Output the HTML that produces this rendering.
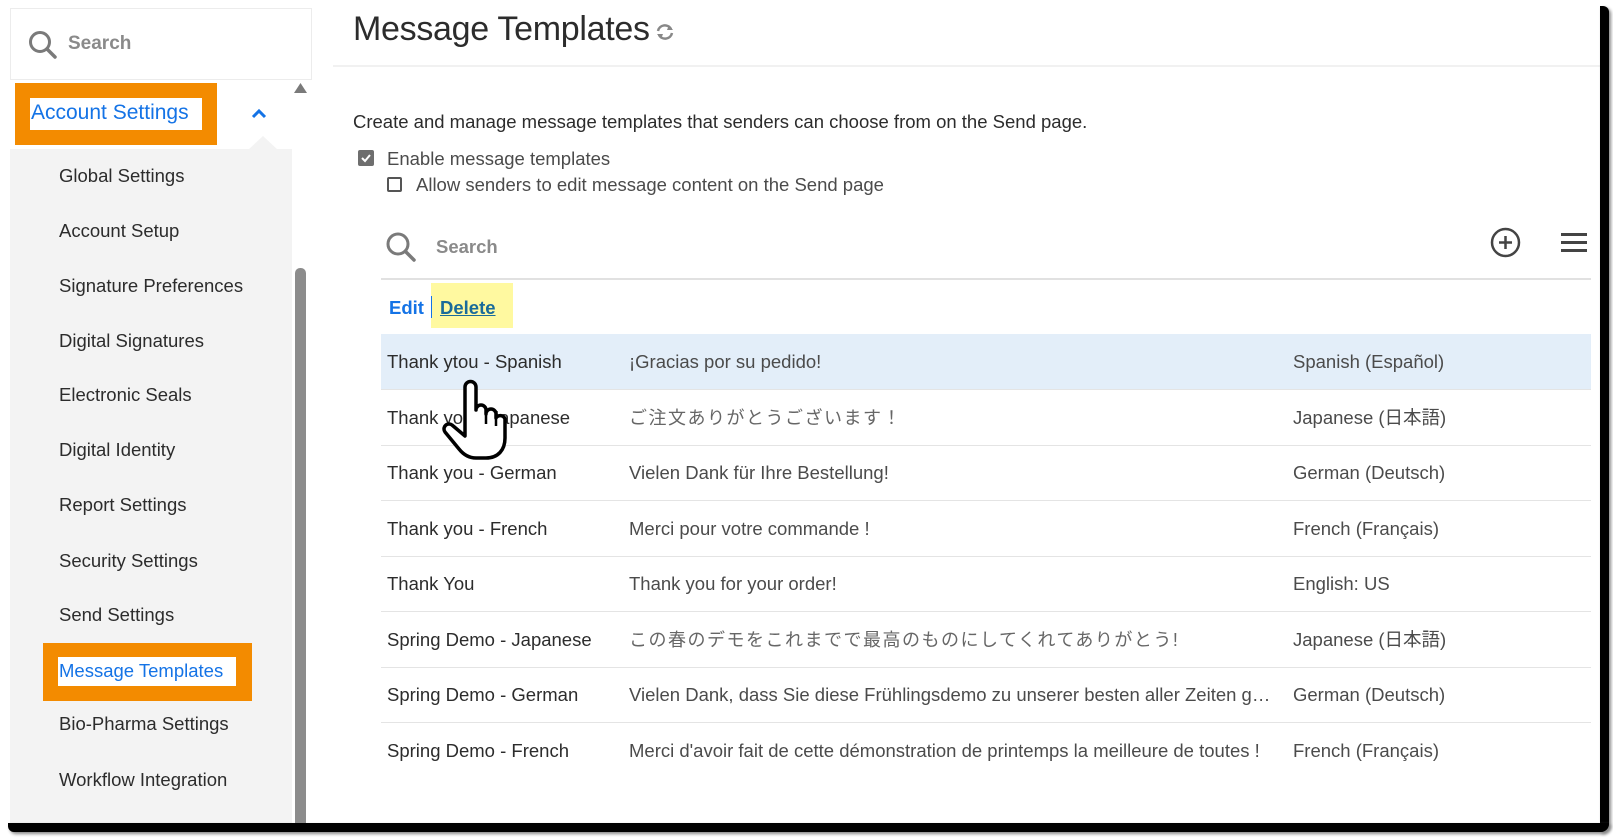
<!DOCTYPE html>
<html><head><meta charset="utf-8"><style>
*{margin:0;padding:0;box-sizing:border-box}
body{width:1613px;height:839px;background:#fff;position:relative;overflow:hidden;font-family:"Liberation Sans","Noto Sans CJK JP",sans-serif;color:#2c2c2c}
.a{position:absolute;white-space:nowrap}
.frame-r{position:absolute;left:1600px;top:6px;width:9px;height:826px;background:#000;border-radius:0 6px 8px 0;box-shadow:2px 2px 3px #888}
.frame-b{position:absolute;left:8px;top:823px;width:1601px;height:9px;background:#000;border-radius:0 0 8px 6px;box-shadow:2px 2px 3px #888}
.side{position:absolute;left:10px;top:149px;width:282px;height:676px;background:#f3f3f3}
.mi{position:absolute;left:59px;font-size:18.5px;line-height:22px;color:#2c2c2c;transform:translateY(-50%);white-space:nowrap}
.row{position:absolute;left:381px;width:1210px;height:56px;border-bottom:1px solid #e4e4e4;font-size:18.5px}
.row span{position:absolute;top:50%;transform:translateY(-50%);white-space:nowrap;line-height:22px;height:22px;overflow:hidden}
.c1{left:6px}.c2{left:248px;max-width:645px;text-overflow:ellipsis}.c3{left:912px}
.jp{font-size:18px;letter-spacing:1.5px}
</style></head><body>
<div class="side"></div>
<div class="a" style="left:10px;top:8px;width:302px;height:72px;border:1px solid #ececec;background:#fff"></div>
<svg class="a" style="left:28px;top:30px" width="30" height="30" viewBox="0 0 30 30"><circle cx="12" cy="12" r="9.5" fill="none" stroke="#7a7a7a" stroke-width="3"/><line x1="19" y1="19" x2="27" y2="27" stroke="#7a7a7a" stroke-width="3.5" stroke-linecap="round"/></svg>
<div class="a" style="left:68px;top:33px;font-size:19px;color:#8a8a8a;font-weight:bold">Search</div>
<div class="a" style="left:10px;top:80px;width:282px;height:69px;background:#fff"></div>
<div class="a" style="left:15px;top:83px;width:202px;height:62px;background:#f38b00"></div>
<div class="a" style="left:30px;top:98px;width:172px;height:32px;background:#fff"></div>
<div class="a" style="left:31px;top:101px;font-size:21px;color:#1473e6">Account Settings</div>
<svg class="a" style="left:251px;top:108px" width="16" height="12" viewBox="0 0 16 12"><path d="M2 9 L8 3 L14 9" fill="none" stroke="#1473e6" stroke-width="3"/></svg>
<svg class="a" style="left:248px;top:136px" width="30" height="14"><path d="M0 14 L15 0 L30 14Z" fill="#f3f3f3"/></svg>
<svg class="a" style="left:294px;top:83px" width="13" height="10"><path d="M0 10 L6.5 0 L13 10Z" fill="#7a7a7a"/></svg>
<div class="a" style="left:295px;top:268px;width:11px;height:559px;background:#8c8c8c;border-radius:5px 5px 0 0"></div>
<div class="mi" style="top:176px">Global Settings</div>
<div class="mi" style="top:231px">Account Setup</div>
<div class="mi" style="top:286px">Signature Preferences</div>
<div class="mi" style="top:341px">Digital Signatures</div>
<div class="mi" style="top:395px">Electronic Seals</div>
<div class="mi" style="top:450px">Digital Identity</div>
<div class="mi" style="top:505px">Report Settings</div>
<div class="mi" style="top:561px">Security Settings</div>
<div class="mi" style="top:615px">Send Settings</div>
<div class="a" style="left:43px;top:643px;width:209px;height:58px;background:#f38b00"></div>
<div class="a" style="left:58px;top:657px;width:178px;height:29px;background:#fff"></div>
<div class="mi" style="top:671px;left:59px;color:#1473e6">Message Templates</div>
<div class="mi" style="top:724px">Bio-Pharma Settings</div>
<div class="mi" style="top:780px">Workflow Integration</div>

<div class="a" style="left:353px;top:10px;font-size:34px;color:#2c2c2c;letter-spacing:-0.3px">Message Templates</div>
<svg class="a" style="left:655px;top:22px" width="20" height="20" viewBox="0 0 20 20"><path d="M3 9 A7 7 0 0 1 16 7" fill="none" stroke="#888" stroke-width="2.5"/><path d="M17 11 A7 7 0 0 1 4 13" fill="none" stroke="#888" stroke-width="2.5"/><path d="M14 3 L18 8 L12 8Z" fill="#888"/><path d="M6 17 L2 12 L8 12Z" fill="#888"/></svg>
<div class="a" style="left:333px;top:65px;width:1267px;height:2px;background:#f1f1f1"></div>
<div class="a" style="left:353px;top:111px;font-size:18.5px">Create and manage message templates that senders can choose from on the Send page.</div>
<div class="a" style="left:358px;top:150px;width:16px;height:16px;background:#6e6e6e;border-radius:2px"></div>
<svg class="a" style="left:358px;top:150px" width="16" height="16"><path d="M4 8 L7 11 L12 5" fill="none" stroke="#fff" stroke-width="2"/></svg>
<div class="a" style="left:387px;top:148px;font-size:18.5px;color:#4b4b4b">Enable message templates</div>
<div class="a" style="left:387px;top:177px;width:15px;height:15px;border:2px solid #555;border-radius:2px"></div>
<div class="a" style="left:416px;top:174px;font-size:18.5px;color:#4b4b4b">Allow senders to edit message content on the Send page</div>

<svg class="a" style="left:385px;top:231px" width="32" height="32" viewBox="0 0 32 32"><circle cx="13" cy="13" r="10" fill="none" stroke="#7a7a7a" stroke-width="3"/><line x1="20.5" y1="20.5" x2="29" y2="29" stroke="#7a7a7a" stroke-width="3.5" stroke-linecap="round"/></svg>
<div class="a" style="left:436px;top:236px;font-size:18.5px;color:#8a8a8a;font-weight:bold">Search</div>
<svg class="a" style="left:1490px;top:227px" width="31" height="31"><circle cx="15.5" cy="15.5" r="13.5" fill="none" stroke="#444" stroke-width="2.5"/><path d="M15.5 9v13M9 15.5h13" stroke="#444" stroke-width="2.5"/></svg>
<div class="a" style="left:1561px;top:233px;width:26px;height:3px;background:#444"></div>
<div class="a" style="left:1561px;top:241px;width:26px;height:3px;background:#444"></div>
<div class="a" style="left:1561px;top:249px;width:26px;height:3px;background:#444"></div>
<div class="a" style="left:381px;top:278px;width:1210px;height:2px;background:#e1e1e1"></div>
<div class="a" style="left:431px;top:283px;width:82px;height:45px;background:#fff9a0"></div>
<div class="a" style="left:389px;top:297px;font-size:18.5px;font-weight:bold;color:#1473e6">Edit</div>
<div class="a" style="left:431px;top:296px;width:1px;height:22px;background:#1473e6"></div>
<div class="a" style="left:440px;top:297px;font-size:18.5px;font-weight:bold;color:#1a6b9a;text-decoration:underline">Delete</div>

<div class="row" style="top:334px;background:#e3eef9"><span class="c1">Thank ytou - Spanish</span><span class="c2" style="color:#4b4b4b">¡Gracias por su pedido!</span><span class="c3" style="color:#4b4b4b">Spanish (Español)</span></div>
<div class="row" style="top:390px"><span class="c1">Thank you - Japanese</span><span class="c2 jp" style="color:#666">ご注文ありがとうございます！</span><span class="c3" style="color:#4b4b4b">Japanese (日本語)</span></div>
<div class="row" style="top:445px"><span class="c1">Thank you - German</span><span class="c2" style="color:#4b4b4b">Vielen Dank für Ihre Bestellung!</span><span class="c3" style="color:#4b4b4b">German (Deutsch)</span></div>
<div class="row" style="top:501px"><span class="c1">Thank you - French</span><span class="c2" style="color:#4b4b4b">Merci pour votre commande !</span><span class="c3" style="color:#4b4b4b">French (Français)</span></div>
<div class="row" style="top:556px"><span class="c1">Thank You</span><span class="c2" style="color:#4b4b4b">Thank you for your order!</span><span class="c3" style="color:#4b4b4b">English: US</span></div>
<div class="row" style="top:612px"><span class="c1">Spring Demo - Japanese</span><span class="c2 jp" style="color:#666">この春のデモをこれまでで最高のものにしてくれてありがとう!</span><span class="c3" style="color:#4b4b4b">Japanese (日本語)</span></div>
<div class="row" style="top:667px"><span class="c1">Spring Demo - German</span><span class="c2" style="color:#4b4b4b">Vielen Dank, dass Sie diese Frühlingsdemo zu unserer besten aller Zeiten gema...</span><span class="c3" style="color:#4b4b4b">German (Deutsch)</span></div>
<div class="row" style="top:723px;border-bottom:none"><span class="c1">Spring Demo - French</span><span class="c2" style="color:#4b4b4b">Merci d'avoir fait de cette démonstration de printemps la meilleure de toutes !</span><span class="c3" style="color:#4b4b4b">French (Français)</span></div>

<svg class="a" style="left:438px;top:378px" width="72" height="84" viewBox="0 0 72 84"><path d="M27 48 V9 a5.5 5.5 0 0 1 11 0 V32 a5 5 0 0 1 10 0 V36 a5 5 0 0 1 10 0 V40 a5 5 0 0 1 9 1 V60 C67 72 60 80 48 80 H38 C30 80 25 76 21 71 L7 54 a5 5 0 0 1 7-7 L27 58 Z" fill="#fff" stroke="#000" stroke-width="3.5" stroke-linejoin="round"/><path d="M48 33 V46 M58 37 V48" stroke="#000" stroke-width="2.5"/></svg>

<div class="frame-r"></div>
<div class="frame-b"></div>
</body></html>
